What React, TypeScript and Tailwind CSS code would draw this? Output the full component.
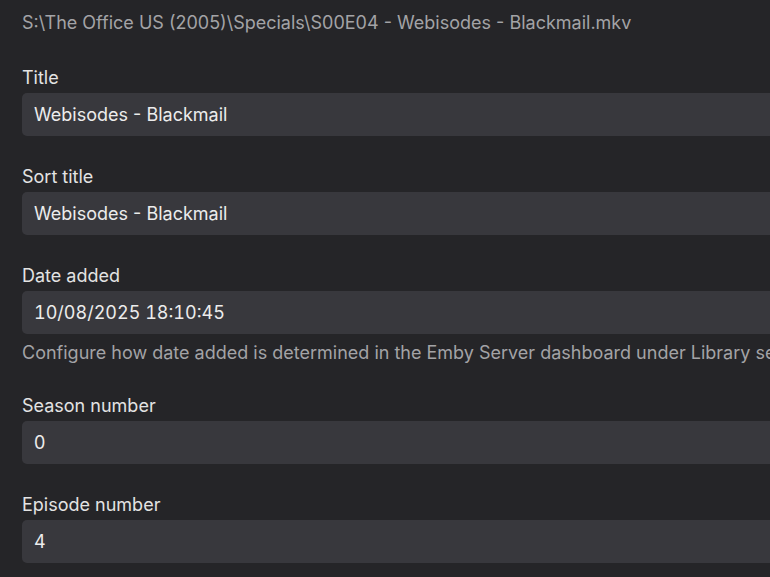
import React from "react";

type FieldProps = {
  label: string;
  value: string;
  help?: string;
  numeric?: boolean;
};

function Field({ label, value, help, numeric }: FieldProps) {
  return (
    <div className="flex flex-col">
      <label className="text-[18px] leading-[24px] pt-[1px] text-[#e3e3e3] mb-[3px]">{label}</label>
      <div
        className={
          numeric
            ? "w-[1000px] h-[43px] rounded-[5px] bg-[#38383d] px-[12px] flex items-center text-[18px] text-[#ececec] tabular-nums"
            : "w-[1000px] h-[43px] rounded-[5px] bg-[#38383d] px-[12px] flex items-center text-[18px] text-[#ececec]"
        }
      >
        {value}
      </div>
      {help && (
        <div className="mt-[7px] text-[18px] leading-[24px] text-[#a3a3a6] whitespace-nowrap">{help}</div>
      )}
    </div>
  );
}

export default function App() {
  return (
    <div
      className="min-h-[577px] w-[770px] overflow-hidden bg-[#252528] pl-[22px] pt-[11px]"
      style={{ fontFamily: "Inter, 'Noto Sans', sans-serif" }}
    >
      <div className="text-[18px] leading-[24px] text-[#a3a3a6] whitespace-nowrap mb-[30px]">
        S:\The Office US (2005)\Specials\S00E04 - Webisodes - Blackmail.mkv
      </div>
      <div className="flex flex-col gap-[28px]">
        <Field label="Title" value="Webisodes - Blackmail" />
        <Field label="Sort title" value="Webisodes - Blackmail" />
        <Field
          label="Date added"
          value="10/08/2025 18:10:45"
          numeric
          help="Configure how date added is determined in the Emby Server dashboard under Library settings"
        />
        <Field label="Season number" value="0" />
        <Field label="Episode number" value="4" />
      </div>
    </div>
  );
}
